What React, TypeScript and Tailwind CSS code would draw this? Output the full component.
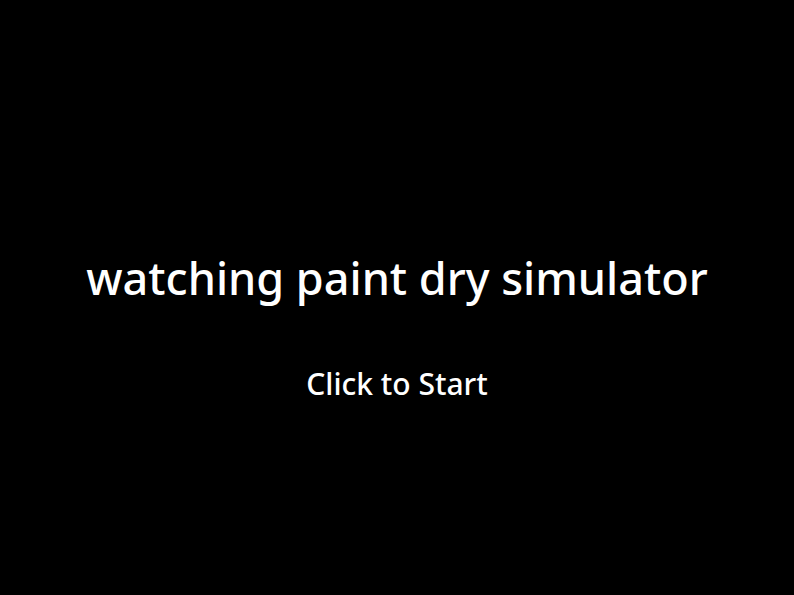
export default function App() {
  return (
    <div
      className="flex h-screen w-full cursor-pointer flex-col items-center bg-black pt-[246px] text-white select-none"
      style={{ fontFamily: '"Comic Sans MS", "Noto Sans", sans-serif' }}
    >
      <h1 className="text-[45px] font-medium leading-[64px]">watching paint dry simulator</h1>
      <p className="mt-[57px] text-[30px] font-medium leading-[34px]">Click to Start</p>
    </div>
  )
}
